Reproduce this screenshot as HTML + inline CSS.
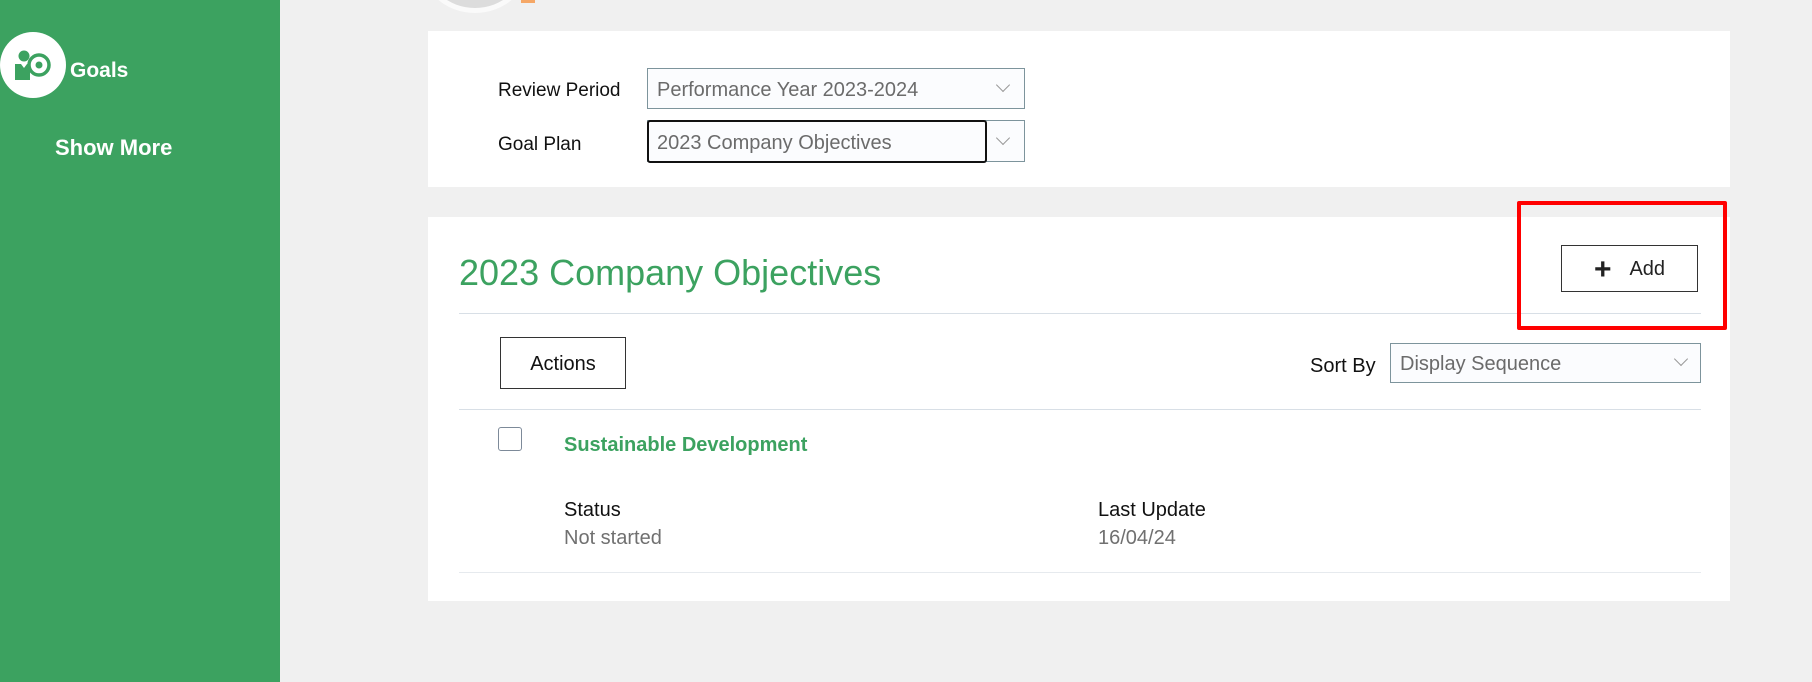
<!DOCTYPE html>
<html><head><meta charset="utf-8"><style>
*{margin:0;padding:0;box-sizing:border-box}
body{width:1812px;height:682px;background:#f0f0f0;position:relative;overflow:hidden;font-family:"Liberation Sans","DejaVu Sans",sans-serif;color:#111}
.a{position:absolute;white-space:nowrap}
.side{left:0;top:0;width:280px;height:682px;background:#3ca260}
.panel{background:#fff}
.sel{background:#fbfcfe;border:1px solid #7d949c;color:#6b6b6b;font-size:20px;padding-left:9px;padding-top:3px;display:flex;align-items:center}
.chev{position:absolute;width:10px;height:10px;border-right:1.5px solid #999;border-bottom:1.5px solid #999;transform:rotate(45deg)}
.lbl{font-size:19px;color:#111}
.hr{height:1px;background:#d8dfe6}
</style></head><body>
<div class="a side"></div>
<div class="a" style="left:0;top:32px;width:66px;height:66px;border-radius:50%;background:#fff"></div>
<svg class="a" style="left:13px;top:48px" width="40" height="34" viewBox="0 0 40 34">
<circle cx="11" cy="8" r="5.5" fill="#3ca260"/>
<path d="M2 16h6l3 4 3-4h3v16H2z" fill="#3ca260"/>
<circle cx="26" cy="17" r="10" fill="none" stroke="#3ca260" stroke-width="3.5"/>
<circle cx="26" cy="17" r="3.5" fill="#3ca260"/>
</svg>
<div class="a" style="left:70px;top:59px;color:#fff;font-size:21px;font-weight:bold">Goals</div>
<div class="a" style="left:55px;top:135px;color:#fff;font-size:22px;font-weight:bold">Show More</div>

<div class="a" style="left:420px;top:-90px;width:110px;height:103px;border-radius:50%;background:#dcdcdc;border:5px solid #fafafa"></div>
<div class="a" style="left:521px;top:0;width:14px;height:3px;background:#f5a766"></div>

<div class="a panel" style="left:428px;top:31px;width:1302px;height:156px"></div>
<div class="a lbl" style="left:498px;top:80px">Review Period</div>
<div class="a sel" style="left:647px;top:68px;width:378px;height:41px">Performance Year 2023-2024<span class="chev" style="left:350px;top:11px"></span></div>
<div class="a lbl" style="left:498px;top:134px">Goal Plan</div>
<div class="a sel" style="left:647px;top:120px;width:378px;height:42px">&nbsp;<span class="chev" style="left:350px;top:12px"></span></div>
<div class="a sel" style="left:647px;top:120px;width:340px;height:43px;border:2px solid #111;border-radius:3px;padding-left:8px">2023 Company Objectives</div>

<div class="a panel" style="left:428px;top:217px;width:1302px;height:384px"></div>
<div class="a" style="left:459px;top:252px;font-size:36px;color:#3ca260">2023 Company Objectives</div>
<div class="a hr" style="left:459px;top:313px;width:1242px"></div>
<div class="a" style="left:1561px;top:245px;width:137px;height:47px;border:1.5px solid #333;display:flex;align-items:center;justify-content:center;font-size:20px;color:#222;padding-top:2px"><span style="font-size:30px;font-weight:bold;margin-right:18px;line-height:1">+</span>Add</div>
<div class="a" style="left:1517px;top:201px;width:210px;height:129px;border:4px solid #f00;border-radius:2px"></div>

<div class="a" style="left:500px;top:337px;width:126px;height:52px;border:1.5px solid #333;display:flex;align-items:center;justify-content:center;font-size:20px;padding-top:3px">Actions</div>
<div class="a lbl" style="left:1310px;top:355px;font-size:20px">Sort By</div>
<div class="a sel" style="left:1390px;top:343px;width:311px;height:40px">Display Sequence<span class="chev" style="left:285px;top:10px"></span></div>
<div class="a hr" style="left:459px;top:409px;width:1242px"></div>

<div class="a" style="left:498px;top:427px;width:24px;height:24px;border:1.5px solid #7d8a99;border-radius:3px"></div>
<div class="a" style="left:564px;top:434px;font-size:20px;font-weight:bold;color:#3ca260">Sustainable Development</div>
<div class="a lbl" style="left:564px;top:499px;font-size:20px">Status</div>
<div class="a" style="left:564px;top:527px;font-size:20px;color:#707070">Not started</div>
<div class="a lbl" style="left:1098px;top:499px;font-size:20px">Last Update</div>
<div class="a" style="left:1098px;top:527px;font-size:20px;color:#707070">16/04/24</div>
<div class="a hr" style="left:459px;top:572px;width:1242px;background:#e6eaee"></div>
</body></html>
